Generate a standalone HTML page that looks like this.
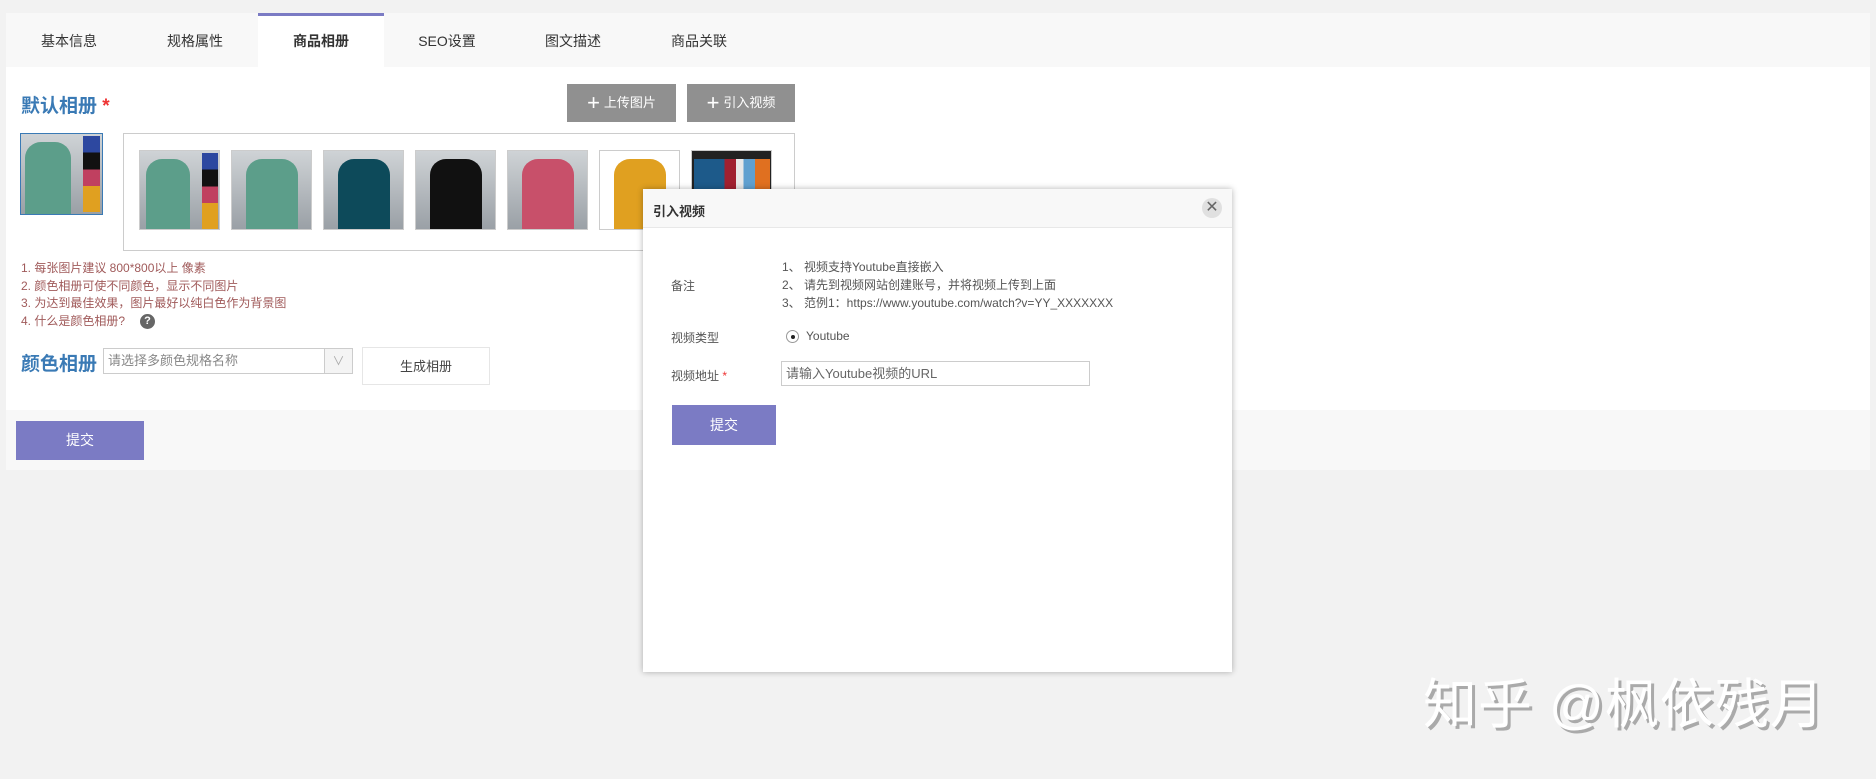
<!DOCTYPE html>
<html><head><meta charset="utf-8"><style>
*{margin:0;padding:0;box-sizing:border-box}
body{width:1876px;height:779px;background:#f2f2f2;font-family:"Liberation Sans","Noto Sans CJK SC",sans-serif;position:relative;overflow:hidden;color:#333}
.a{position:absolute}
.page{left:6px;top:13px;width:1864px;height:457px;background:#fff}
.tabs{left:6px;top:13px;width:1864px;height:54px;background:#f8f8f8}
.tab{top:13px;height:54px;width:126px;text-align:center;line-height:56px;font-size:14px;color:#333}
.tab.on{background:#fff;border-top:3px solid #7b7bc4;line-height:50px;font-weight:bold}
.h{font-size:19px;font-weight:bold;color:#3a7ab5}
.btn{background:#909090;color:#fff;font-size:13px;text-align:center;line-height:38px}
.btn b{font-size:22px;font-weight:normal;vertical-align:-3px;margin-right:4px}
.th{width:81px;height:80px;background:linear-gradient(#cfd3d6,#9aa0a6);overflow:hidden;border:1px solid #ccc}
.th i{position:absolute;left:14px;top:8px;width:52px;height:74px;border-radius:16px 16px 0 0}
.note{font-size:12px;color:#a05a5a;left:21px}
.foot{left:6px;top:410px;width:1864px;height:60px;background:#f8f8f8}
.sub{background:#7b7bc4;color:#fff;font-size:14px;text-align:center}
.m{left:643px;top:189px;width:589px;height:483px;background:#fff;box-shadow:0 0 6px rgba(0,0,0,.3)}
.ml{font-size:12px;color:#555}
</style></head><body>
<div class="a page"></div>
<div class="a tabs"></div>
<div class="a tab" style="left:6px">基本信息</div>
<div class="a tab" style="left:132px">规格属性</div>
<div class="a tab on" style="left:258px">商品相册</div>
<div class="a tab" style="left:384px">SEO设置</div>
<div class="a tab" style="left:510px">图文描述</div>
<div class="a tab" style="left:636px">商品关联</div>

<div class="a h" style="left:21px;top:91px">默认相册 <span style="color:#e33">*</span></div>
<div class="a btn" style="left:567px;top:84px;width:109px;height:38px"><b>+</b>上传图片</div>
<div class="a btn" style="left:687px;top:84px;width:108px;height:38px"><b>+</b>引入视频</div>

<div class="a th" style="left:20px;top:133px;width:83px;height:82px;border:1px solid #3a7ab5"><i style="background:#5c9e8a;width:46px;left:4px"></i><i style="left:62px;top:2px;width:17px;height:76px;border-radius:0;background:linear-gradient(#2d48a0 0 22%,#111 22% 44%,#c04060 44% 66%,#e0a020 66%)"></i></div>
<div class="a" style="left:123px;top:133px;width:672px;height:118px;border:1px solid #ccc"></div>
<div class="a th" style="left:139px;top:150px"><i style="background:#5c9e8a;width:44px;left:6px"></i><i style="left:62px;top:2px;width:16px;height:76px;border-radius:0;background:linear-gradient(#2d48a0 0 22%,#111 22% 44%,#c04060 44% 66%,#e0a020 66%)"></i></div>
<div class="a th" style="left:231px;top:150px"><i style="background:#5c9e8a"></i></div>
<div class="a th" style="left:323px;top:150px"><i style="background:#0d4a5a"></i></div>
<div class="a th" style="left:415px;top:150px"><i style="background:#111"></i></div>
<div class="a th" style="left:507px;top:150px"><i style="background:#c8506a"></i></div>
<div class="a th" style="left:599px;top:150px;background:#fff"><i style="background:#e0a020"></i></div>
<div class="a th" style="left:691px;top:150px;background:#222"><i style="left:2px;width:76px;border-radius:0;background:linear-gradient(90deg,#1d5a8a 0 40%,#a02030 40% 55%,#e8e8e8 55% 65%,#60a0d0 65% 80%,#e07020 80%)"></i></div>

<div class="a note" style="top:259px">1. 每张图片建议 800*800以上 像素</div>
<div class="a note" style="top:277px">2. 颜色相册可使不同颜色，显示不同图片</div>
<div class="a note" style="top:294px">3. 为达到最佳效果，图片最好以纯白色作为背景图</div>
<div class="a note" style="top:312px">4. 什么是颜色相册?</div>
<div class="a" style="left:140px;top:314px;width:15px;height:15px;border-radius:50%;background:#666;color:#fff;font-size:11px;font-weight:bold;text-align:center;line-height:15px">?</div>

<div class="a h" style="left:21px;top:349px">颜色相册</div>
<div class="a" style="left:103px;top:348px;width:250px;height:26px;border:1px solid #ccc;font-size:13px;color:#888;line-height:24px;padding-left:4px">请选择多颜色规格名称</div>
<div class="a" style="left:324px;top:349px;width:28px;height:24px;border-left:1px solid #ccc;background:#f4f4f4;color:#aaa;text-align:center;font-size:12px;line-height:24px">∨</div>
<div class="a" style="left:362px;top:347px;width:128px;height:38px;border:1px solid #e6e6e6;font-size:13px;text-align:center;line-height:38px;color:#444">生成相册</div>

<div class="a foot"></div>
<div class="a sub" style="left:16px;top:421px;width:128px;height:39px;line-height:39px">提交</div>

<div class="a m"></div>
<div class="a" style="left:643px;top:189px;width:589px;height:39px;background:#f8f8f8;border-bottom:1px solid #e8e8e8"></div>
<div class="a" style="left:653px;top:201px;font-size:13px;font-weight:bold">引入视频</div>
<div class="a" style="left:1202px;top:198px;width:20px;height:20px;border-radius:50%;background:#e0e0e0;color:#666;text-align:center;line-height:20px;font-size:16px">✕</div>
<div class="a ml" style="left:671px;top:277px">备注</div>
<div class="a ml" style="left:782px;top:258px;line-height:18px">1、 视频支持Youtube直接嵌入<br>2、 请先到视频网站创建账号，并将视频上传到上面<br>3、 范例1：https://www.youtube.com/watch?v=YY_XXXXXXX</div>
<div class="a ml" style="left:671px;top:329px">视频类型</div>
<div class="a" style="left:786px;top:330px;width:13px;height:13px;border:1px solid #999;border-radius:50%"><div style="margin:3.5px;width:4px;height:4px;border-radius:50%;background:#222"></div></div>
<div class="a ml" style="left:806px;top:329px">Youtube</div>
<div class="a ml" style="left:671px;top:367px">视频地址 <span style="color:#e33">*</span></div>
<div class="a" style="left:781px;top:361px;width:309px;height:25px;border:1px solid #ccc;font-size:13px;color:#666;line-height:23px;padding-left:4px">请输入Youtube视频的URL</div>
<div class="a sub" style="left:672px;top:405px;width:104px;height:40px;line-height:40px">提交</div>

<div class="a" style="left:1423px;top:660px;font-size:54px;color:#fff;text-shadow:3px 3px 0 #aaa;white-space:nowrap;letter-spacing:1px">知乎 @枫依残月</div>
</body></html>
